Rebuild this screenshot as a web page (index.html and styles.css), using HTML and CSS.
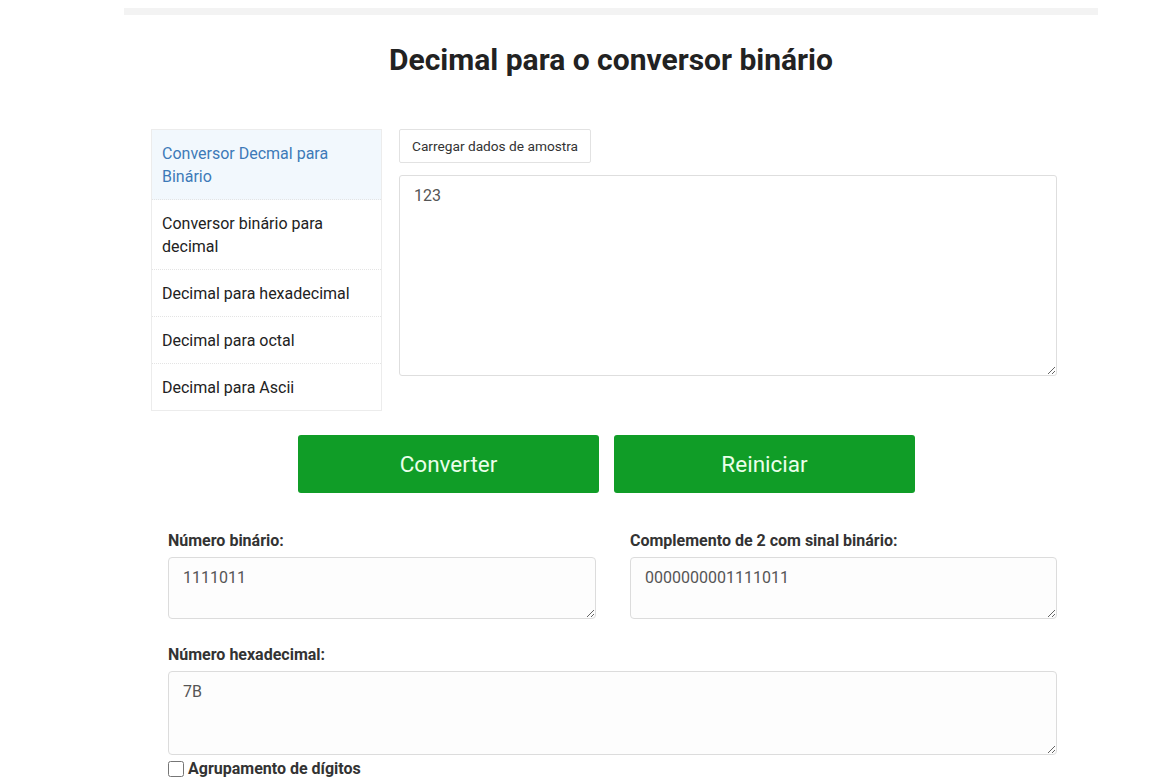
FILE: index.html
```html
<!DOCTYPE html>
<html lang="pt">
<head>
<meta charset="utf-8">
<title>Decimal para o conversor binário</title>
<link rel="stylesheet" href="styles.css">
</head>
<body>
<div class="page">
  <div class="topbar"></div>
  <h1 class="title">Decimal para o conversor binário</h1>
  <div class="main">
    <ul class="sidebar">
      <li class="item active">Conversor Decmal para Binário</li>
      <li class="item">Conversor binário para decimal</li>
      <li class="item">Decimal para hexadecimal</li>
      <li class="item">Decimal para octal</li>
      <li class="item">Decimal para Ascii</li>
    </ul>
    <div class="inputcol">
      <button class="sample">Carregar dados de amostra</button>
      <textarea class="input">123</textarea>
    </div>
  </div>
  <div class="actions">
    <button class="btn">Converter</button>
    <button class="btn">Reiniciar</button>
  </div>
  <div class="outputs">
    <div class="row2">
      <div class="field left">
        <label class="lbl">Número binário:</label>
        <textarea class="out small">1111011</textarea>
      </div>
      <div class="field right">
        <label class="lbl">Complemento de 2 com sinal binário:</label>
        <textarea class="out small">0000000001111011</textarea>
      </div>
    </div>
    <div class="field full">
      <label class="lbl">Número hexadecimal:</label>
      <textarea class="out big">7B</textarea>
    </div>
    <label class="check"><input type="checkbox" class="cb"><span>Agrupamento de dígitos</span></label>
  </div>
</div>
</body>
</html>
```

FILE: styles.css
```css
html, body {
  margin: 0;
  padding: 0;
  background: #ffffff;
  font-family: Roboto, "Liberation Sans", Arial, sans-serif;
  color: #222;
}
.page {
  width: 974px;
  margin-left: 124px;
  padding-top: 8px;
}
.topbar {
  height: 7px;
  background: #f3f3f3;
}
.title {
  margin: 27px 0 0 0;
  font-size: 30px;
  line-height: 35px;
  font-weight: 700;
  text-align: center;
  color: #222;
}
.main {
  display: flex;
  gap: 17px;
  margin-top: 52px;
  padding-left: 27px;
}
.sidebar {
  list-style: none;
  margin: 0;
  padding: 0;
  width: 231px;
  border: 1px solid #ececec;
  box-sizing: border-box;
  height: 282px;
}
.item {
  padding: 12px 10px 11px 10px;
  font-size: 16px;
  line-height: 23px;
  color: #222;
  border-bottom: 1px dotted #e4e4e4;
}
.item:last-child { border-bottom: none; }
.item.active {
  background: #f2f8fd;
  color: #3d7ab8;
}
.inputcol {
  width: 658px;
  display: flex;
  flex-direction: column;
  align-items: flex-start;
  gap: 12px;
}
.sample {
  height: 34px;
  padding: 0 12px;
  background: #fff;
  border: 1px solid #e2e2e2;
  border-radius: 2px;
  font-family: Roboto, "Liberation Sans", Arial, sans-serif;
  font-size: 13.7px;
  color: #333;
}
.input {
  width: 658px;
  height: 201px;
  box-sizing: border-box;
  border: 1px solid #dedede;
  border-radius: 3px;
  padding: 10px 14px;
  font-family: Roboto, "Liberation Sans", Arial, sans-serif;
  font-size: 16px;
  line-height: 20px;
  color: #555;
  resize: both;
}
.actions {
  display: flex;
  gap: 15px;
  margin-top: 24px;
  padding-left: 174px;
}
.btn {
  width: 301px;
  height: 58px;
  background: #109d27;
  border: none;
  border-radius: 3px;
  color: #eaffea;
  font-family: Roboto, "Liberation Sans", Arial, sans-serif;
  font-size: 22.5px;
}
.outputs {
  margin-top: 38px;
  padding-left: 44px;
  width: 889px;
}
.row2 {
  display: flex;
  gap: 34px;
}
.row2 .left { width: 428px; }
.row2 .right { width: 427px; }
.field {
  display: flex;
  flex-direction: column;
  gap: 7px;
}
.full { margin-top: 26px; }
.lbl {
  font-size: 16px;
  line-height: 19px;
  font-weight: 700;
  color: #333;
}
.out {
  width: 100%;
  box-sizing: border-box;
  border: 1px solid #dcdcdc;
  border-radius: 4px;
  background: #fdfdfd;
  padding: 10px 14px;
  font-family: Roboto, "Liberation Sans", Arial, sans-serif;
  font-size: 16px;
  line-height: 20px;
  color: #555;
}
.small { height: 62px; }
.big { height: 84px; }
.check {
  display: flex;
  align-items: center;
  gap: 4px;
  margin-top: 4px;
  font-size: 16px;
  font-weight: 700;
  color: #333;
}
.cb {
  margin: 0;
  width: 16px;
  height: 16px;
}
```
